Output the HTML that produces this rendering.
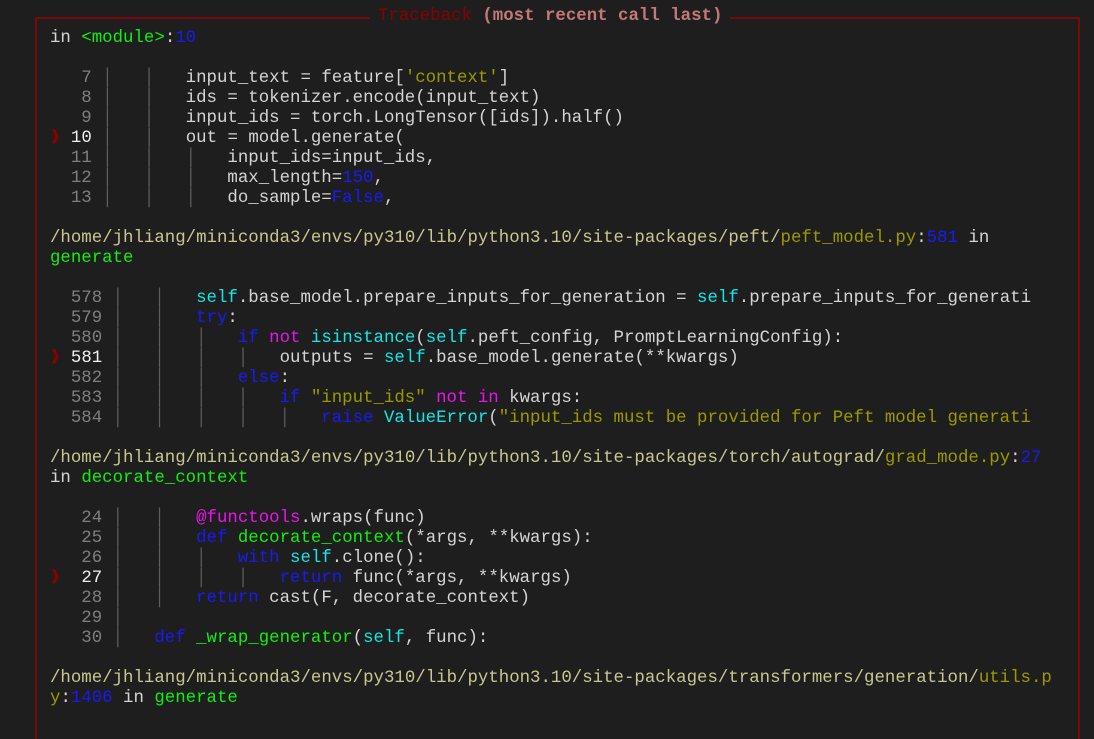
<!DOCTYPE html>
<html><head><meta charset="utf-8">
<style>
html,body{margin:0;padding:0;background:#1e1e1e;width:1094px;height:713px;overflow:hidden}
.box{position:absolute;left:35px;top:17px;width:1041px;height:720px;border:2px solid #7a0a0a;border-bottom:none}
.title{position:absolute;left:370px;top:6px;background:#1e1e1e;padding:0 8px;font:17.4px/22px "Liberation Mono",monospace;white-space:pre}
pre{position:absolute;left:50px;top:29px;margin:0;font:17.4px/20px "Liberation Mono","DejaVu Sans Mono",monospace;color:#d4d4d4;width:1030px;overflow:hidden}
.g{display:inline-block;width:1ch;text-align:center;color:#5e5e5e}
.n{color:#7f7f7f}.cn{color:#f0f0f0}.ar{color:#8b0000;font-weight:bold}
.gr{color:#11ee11}.bl{color:#1a1af5}.cy{color:#14e6e6}.mg{color:#ea14ea}.ol{color:#9a9a00}
.pa{color:#c9c78f}.fn{color:#9a9a00}
</style></head><body>
<div class="box"></div>
<div class="title"><span style="color:#8b0000">Traceback</span> <span style="color:#c57777;font-weight:bold">(most recent call last)</span></div>
<pre>in <span class="gr">&lt;module&gt;</span>:<span class="bl">10</span>

<span class="n">   7</span> <span class="g">│</span>   <span class="g">│</span>   input_text = feature[<span class="ol">'context'</span>]
<span class="n">   8</span> <span class="g">│</span>   <span class="g">│</span>   ids = tokenizer.encode(input_text)
<span class="n">   9</span> <span class="g">│</span>   <span class="g">│</span>   input_ids = torch.LongTensor([ids]).half()
<span class="ar">❱</span> <span class="cn">10</span> <span class="g">│</span>   <span class="g">│</span>   out = model.generate(
<span class="n">  11</span> <span class="g">│</span>   <span class="g">│</span>   <span class="g">│</span>   input_ids=input_ids,
<span class="n">  12</span> <span class="g">│</span>   <span class="g">│</span>   <span class="g">│</span>   max_length=<span class="bl">150</span>,
<span class="n">  13</span> <span class="g">│</span>   <span class="g">│</span>   <span class="g">│</span>   do_sample=<span class="bl">False</span>,

<span class="pa">/home/jhliang/miniconda3/envs/py310/lib/python3.10/site-packages/peft/</span><span class="fn">peft_model.py</span>:<span class="bl">581</span> in
<span class="gr">generate</span>

<span class="n">  578</span> <span class="g">│</span>   <span class="g">│</span>   <span class="cy">self</span>.base_model.prepare_inputs_for_generation = <span class="cy">self</span>.prepare_inputs_for_generati
<span class="n">  579</span> <span class="g">│</span>   <span class="g">│</span>   <span class="bl">try</span>:
<span class="n">  580</span> <span class="g">│</span>   <span class="g">│</span>   <span class="g">│</span>   <span class="bl">if</span> <span class="mg">not</span> <span class="cy">isinstance</span>(<span class="cy">self</span>.peft_config, PromptLearningConfig):
<span class="ar">❱</span> <span class="cn">581</span> <span class="g">│</span>   <span class="g">│</span>   <span class="g">│</span>   <span class="g">│</span>   outputs = <span class="cy">self</span>.base_model.generate(**kwargs)
<span class="n">  582</span> <span class="g">│</span>   <span class="g">│</span>   <span class="g">│</span>   <span class="bl">else</span>:
<span class="n">  583</span> <span class="g">│</span>   <span class="g">│</span>   <span class="g">│</span>   <span class="g">│</span>   <span class="bl">if</span> <span class="ol">"input_ids"</span> <span class="mg">not</span> <span class="mg">in</span> kwargs:
<span class="n">  584</span> <span class="g">│</span>   <span class="g">│</span>   <span class="g">│</span>   <span class="g">│</span>   <span class="g">│</span>   <span class="bl">raise</span> <span class="cy">ValueError</span>(<span class="ol">"input_ids must be provided for Peft model generati</span>

<span class="pa">/home/jhliang/miniconda3/envs/py310/lib/python3.10/site-packages/torch/autograd/</span><span class="fn">grad_mode.py</span>:<span class="bl">27</span>
in <span class="gr">decorate_context</span>

<span class="n">   24</span> <span class="g">│</span>   <span class="g">│</span>   <span class="mg">@functools</span>.wraps(func)
<span class="n">   25</span> <span class="g">│</span>   <span class="g">│</span>   <span class="bl">def</span> <span class="gr">decorate_context</span>(*args, **kwargs):
<span class="n">   26</span> <span class="g">│</span>   <span class="g">│</span>   <span class="g">│</span>   <span class="bl">with</span> <span class="cy">self</span>.clone():
<span class="ar">❱</span>  <span class="cn">27</span> <span class="g">│</span>   <span class="g">│</span>   <span class="g">│</span>   <span class="g">│</span>   <span class="bl">return</span> func(*args, **kwargs)
<span class="n">   28</span> <span class="g">│</span>   <span class="g">│</span>   <span class="bl">return</span> cast(F, decorate_context)
<span class="n">   29</span> <span class="g">│</span>
<span class="n">   30</span> <span class="g">│</span>   <span class="bl">def</span> <span class="gr">_wrap_generator</span>(<span class="cy">self</span>, func):

<span class="pa">/home/jhliang/miniconda3/envs/py310/lib/python3.10/site-packages/transformers/generation/</span><span class="fn">utils.p</span>
<span class="fn">y</span>:<span class="bl">1406</span> in <span class="gr">generate</span>
</pre>
</body></html>
